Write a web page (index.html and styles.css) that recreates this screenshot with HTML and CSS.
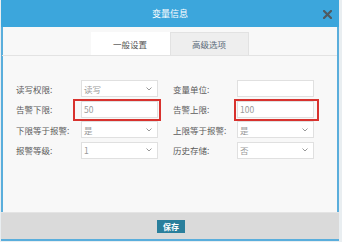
FILE: index.html
```html
<!DOCTYPE html>
<html lang="zh-CN">
<head>
  <meta charset="UTF-8">
  <title>变量信息</title>
  <link rel="stylesheet" href="styles.css">
</head>
<body>
  <div class="dialog">
    <div class="dialog-header">
      <span class="dialog-title">变量信息</span>
      <svg class="close" width="9" height="9" viewBox="0 0 9 9">
        <path d="M1 1 L8 8 M8 1 L1 8" stroke="#505a60" stroke-width="2.2" stroke-linecap="square"/>
      </svg>
    </div>

    <div class="tabs">
      <div class="tab active">一般设置</div>
      <div class="tab">高级选项</div>
    </div>

    <div class="dialog-body">
      <div class="form">
        <label class="lbl">读写权限:</label>
        <div class="field select"><span>读写</span><svg class="chev" width="6" height="4" viewBox="0 0 6 4"><path d="M0.5 0.5 L3 3 L5.5 0.5" fill="none" stroke="#999" stroke-width="1"/></svg></div>
        <label class="lbl lbl-r">变量单位:</label>
        <div class="field"></div>

        <label class="lbl">告警下限:</label>
        <div class="field marked mark-l"><span>50</span></div>
        <label class="lbl lbl-r">告警上限:</label>
        <div class="field marked mark-r"><span>100</span></div>

        <label class="lbl">下限等于报警:</label>
        <div class="field select"><span>是</span><svg class="chev" width="6" height="4" viewBox="0 0 6 4"><path d="M0.5 0.5 L3 3 L5.5 0.5" fill="none" stroke="#999" stroke-width="1"/></svg></div>
        <label class="lbl lbl-r">上限等于报警:</label>
        <div class="field select"><span>是</span><svg class="chev" width="6" height="4" viewBox="0 0 6 4"><path d="M0.5 0.5 L3 3 L5.5 0.5" fill="none" stroke="#999" stroke-width="1"/></svg></div>

        <label class="lbl">报警等级:</label>
        <div class="field select"><span>1</span><svg class="chev" width="6" height="4" viewBox="0 0 6 4"><path d="M0.5 0.5 L3 3 L5.5 0.5" fill="none" stroke="#999" stroke-width="1"/></svg></div>
        <label class="lbl lbl-r">历史存储:</label>
        <div class="field select"><span>否</span><svg class="chev" width="6" height="4" viewBox="0 0 6 4"><path d="M0.5 0.5 L3 3 L5.5 0.5" fill="none" stroke="#999" stroke-width="1"/></svg></div>
      </div>
    </div>

    <div class="dialog-footer">
      <button class="save-btn">保存</button>
    </div>
  </div>
</body>
</html>
```

FILE: styles.css
```css
* {
  box-sizing: border-box;
}
body {
  margin: 0;
  background: #e9eef1;
  font-family: "Noto Sans CJK SC", "Noto Sans", sans-serif;
  font-size: 8.5px;
  color: #555;
}
.dialog {
  margin-left: 1px;
  width: 338px;
  height: 241px;
  border: 2px solid #5aaedc;
  border-top: none;
  background: #f8f8f8;
  display: flex;
  flex-direction: column;
}
.dialog-header {
  height: 27px;
  margin: 0 -2px;
  background: #3ca6dc;
  display: flex;
  align-items: center;
  justify-content: center;
  position: relative;
}
.dialog-title {
  color: #fff;
  font-size: 9px;
}
.close {
  position: absolute;
  right: 7px;
  top: 10px;
}
.tabs {
  display: flex;
  justify-content: center;
  padding-top: 5px;
  border-bottom: 1px solid #e3e3e3;
  margin-left: -1px;
}
.tab {
  width: 79px;
  height: 23px;
  display: flex;
  align-items: center;
  justify-content: center;
  color: #5a6a78;
  background: #eeeeee;
  border: 1px solid #e2e2e2;
  border-bottom: none;
}
.tab.active {
  background: #fff;
  border-color: #fff;
  color: #555;
}
.dialog-body {
  flex: 1;
  padding: 24px 0 0 13px;
}
.form {
  display: grid;
  grid-template-columns: 65px 77px 79px 77px;
  grid-auto-rows: 17px;
  row-gap: 3.5px;
  align-items: center;
}
.lbl {
  color: #5c5c5c;
  white-space: nowrap;
}
.lbl-r {
  padding-left: 15px;
}
.field {
  height: 17px;
  background: #fff;
  border: 1px solid #e0e0e0;
  display: flex;
  align-items: center;
  justify-content: space-between;
  padding: 0 5px 0 2px;
  color: #9a9a9a;
  position: relative;
}
.marked::after {
  content: "";
  position: absolute;
  top: -3px;
  bottom: -4px;
  border: 2px solid #d8322e;
}
.mark-l::after {
  left: -9px;
  right: -4px;
}
.mark-r::after {
  left: -4px;
  right: -6px;
}
.dialog-footer {
  height: 27px;
  margin: 0 -2px;
  padding: 0 2px;
  background: #dadada;
  border-top: 1px solid #e4e4e4;
  display: flex;
  justify-content: center;
  align-items: center;
}
.save-btn {
  width: 28px;
  height: 13px;
  margin-left: 2px;
  padding: 0;
  border: none;
  background: #2a7f9c;
  color: #fff;
  font-family: inherit;
  font-size: 8px;
  font-weight: bold;
  line-height: 13px;
}
```
